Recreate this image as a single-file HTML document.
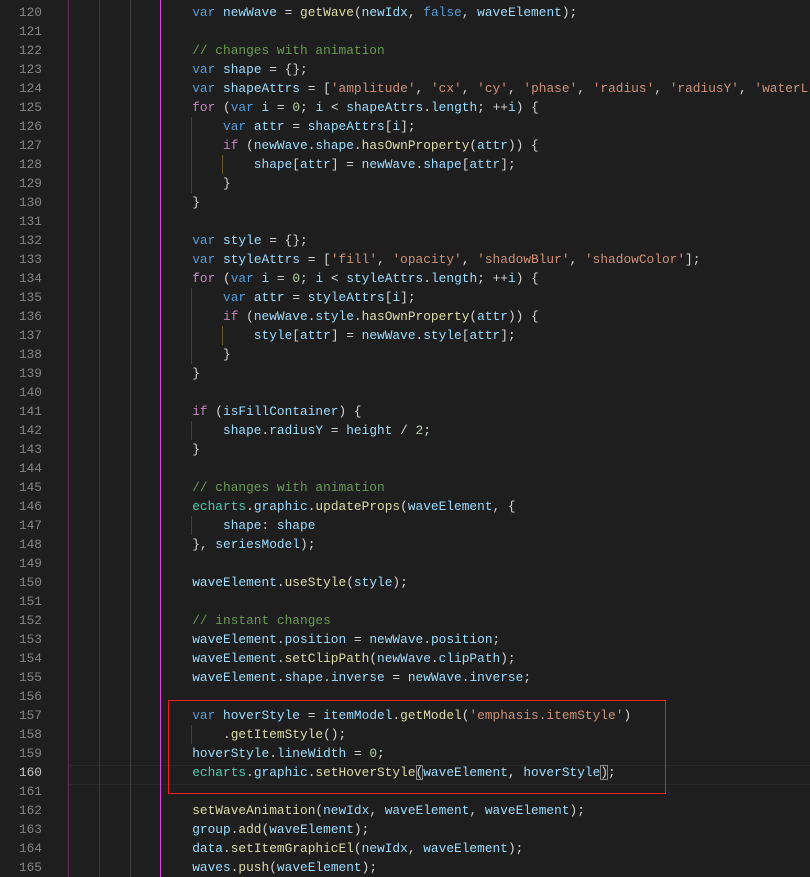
<!DOCTYPE html>
<html><head><meta charset="utf-8"><style>
html,body{margin:0;padding:0;background:#1e1e1e;width:810px;height:877px;overflow:hidden}
#w{position:absolute;left:0;top:0;width:810px;height:877px;overflow:hidden}
body{position:relative;font-family:Consolas,"Liberation Mono","DejaVu Sans Mono",monospace;font-size:12.8px}
.ln{position:absolute;left:0;width:42px;text-align:right;color:#858585;line-height:19px;height:19px}
.c{position:absolute;left:69px;white-space:pre;color:#d4d4d4;line-height:19px;height:19px;letter-spacing:0.02px}
.g{position:absolute;width:1px}
.k{color:#569cd6}.f{color:#c586c0}.v{color:#9cdcfe}.fn{color:#dcdcaa}.s{color:#ce9178}.cm{color:#6a9955}.n{color:#b5cea8}.t{color:#4ec9b0}
</style></head><body><div id="w">
<div style="position:absolute;left:68px;right:0;top:765px;height:18px;border-top:1px solid #282828;border-bottom:1px solid #282828"></div>
<div class="g" style="left:68px;top:0;height:877px;background:#5a2d5a"></div>
<div class="g" style="left:99px;top:0;height:877px;background:#1e3f5a"></div>
<div class="g" style="left:130px;top:0;height:877px;background:#404040"></div>
<div class="g" style="left:160px;top:0;height:877px;background:#da44da"></div>
<div class="g" style="left:191px;top:117px;height:76px;background:#1e4a6a"></div>
<div class="g" style="left:191px;top:288px;height:76px;background:#1e4a6a"></div>
<div class="g" style="left:191px;top:421px;height:19px;background:#1e4a6a"></div>
<div class="g" style="left:191px;top:516px;height:19px;background:#1e4a6a"></div>
<div class="g" style="left:191px;top:725px;height:19px;background:#404040"></div>
<div class="g" style="left:222px;top:155px;height:19px;background:#6a5a1a"></div>
<div class="g" style="left:222px;top:326px;height:19px;background:#6a5a1a"></div>

<div class="ln" style="top:3px">120</div><div class="c" style="top:3px">                <span class="k">var</span> <span class="v">newWave</span> = <span class="fn">getWave</span>(<span class="v">newIdx</span>, <span class="k">false</span>, <span class="v">waveElement</span>);</div>
<div class="ln" style="top:22px">121</div>
<div class="ln" style="top:41px">122</div><div class="c" style="top:41px">                <span class="cm">// changes with animation</span></div>
<div class="ln" style="top:60px">123</div><div class="c" style="top:60px">                <span class="k">var</span> <span class="v">shape</span> = {};</div>
<div class="ln" style="top:79px">124</div><div class="c" style="top:79px">                <span class="k">var</span> <span class="v">shapeAttrs</span> = [<span class="s">'amplitude'</span>, <span class="s">'cx'</span>, <span class="s">'cy'</span>, <span class="s">'phase'</span>, <span class="s">'radius'</span>, <span class="s">'radiusY'</span>, <span class="s">'waterL</span></div>
<div class="ln" style="top:98px">125</div><div class="c" style="top:98px">                <span class="f">for</span> (<span class="k">var</span> <span class="v">i</span> = <span class="n">0</span>; <span class="v">i</span> &lt; <span class="v">shapeAttrs</span>.<span class="v">length</span>; ++<span class="v">i</span>) {</div>
<div class="ln" style="top:117px">126</div><div class="c" style="top:117px">                    <span class="k">var</span> <span class="v">attr</span> = <span class="v">shapeAttrs</span>[<span class="v">i</span>];</div>
<div class="ln" style="top:136px">127</div><div class="c" style="top:136px">                    <span class="f">if</span> (<span class="v">newWave</span>.<span class="v">shape</span>.<span class="fn">hasOwnProperty</span>(<span class="v">attr</span>)) {</div>
<div class="ln" style="top:155px">128</div><div class="c" style="top:155px">                        <span class="v">shape</span>[<span class="v">attr</span>] = <span class="v">newWave</span>.<span class="v">shape</span>[<span class="v">attr</span>];</div>
<div class="ln" style="top:174px">129</div><div class="c" style="top:174px">                    }</div>
<div class="ln" style="top:193px">130</div><div class="c" style="top:193px">                }</div>
<div class="ln" style="top:212px">131</div>
<div class="ln" style="top:231px">132</div><div class="c" style="top:231px">                <span class="k">var</span> <span class="v">style</span> = {};</div>
<div class="ln" style="top:250px">133</div><div class="c" style="top:250px">                <span class="k">var</span> <span class="v">styleAttrs</span> = [<span class="s">'fill'</span>, <span class="s">'opacity'</span>, <span class="s">'shadowBlur'</span>, <span class="s">'shadowColor'</span>];</div>
<div class="ln" style="top:269px">134</div><div class="c" style="top:269px">                <span class="f">for</span> (<span class="k">var</span> <span class="v">i</span> = <span class="n">0</span>; <span class="v">i</span> &lt; <span class="v">styleAttrs</span>.<span class="v">length</span>; ++<span class="v">i</span>) {</div>
<div class="ln" style="top:288px">135</div><div class="c" style="top:288px">                    <span class="k">var</span> <span class="v">attr</span> = <span class="v">styleAttrs</span>[<span class="v">i</span>];</div>
<div class="ln" style="top:307px">136</div><div class="c" style="top:307px">                    <span class="f">if</span> (<span class="v">newWave</span>.<span class="v">style</span>.<span class="fn">hasOwnProperty</span>(<span class="v">attr</span>)) {</div>
<div class="ln" style="top:326px">137</div><div class="c" style="top:326px">                        <span class="v">style</span>[<span class="v">attr</span>] = <span class="v">newWave</span>.<span class="v">style</span>[<span class="v">attr</span>];</div>
<div class="ln" style="top:345px">138</div><div class="c" style="top:345px">                    }</div>
<div class="ln" style="top:364px">139</div><div class="c" style="top:364px">                }</div>
<div class="ln" style="top:383px">140</div>
<div class="ln" style="top:402px">141</div><div class="c" style="top:402px">                <span class="f">if</span> (<span class="v">isFillContainer</span>) {</div>
<div class="ln" style="top:421px">142</div><div class="c" style="top:421px">                    <span class="v">shape</span>.<span class="v">radiusY</span> = <span class="v">height</span> / <span class="n">2</span>;</div>
<div class="ln" style="top:440px">143</div><div class="c" style="top:440px">                }</div>
<div class="ln" style="top:459px">144</div>
<div class="ln" style="top:478px">145</div><div class="c" style="top:478px">                <span class="cm">// changes with animation</span></div>
<div class="ln" style="top:497px">146</div><div class="c" style="top:497px">                <span class="t">echarts</span>.<span class="v">graphic</span>.<span class="fn">updateProps</span>(<span class="v">waveElement</span>, {</div>
<div class="ln" style="top:516px">147</div><div class="c" style="top:516px">                    <span class="v">shape</span>: <span class="v">shape</span></div>
<div class="ln" style="top:535px">148</div><div class="c" style="top:535px">                }, <span class="v">seriesModel</span>);</div>
<div class="ln" style="top:554px">149</div>
<div class="ln" style="top:573px">150</div><div class="c" style="top:573px">                <span class="v">waveElement</span>.<span class="fn">useStyle</span>(<span class="v">style</span>);</div>
<div class="ln" style="top:592px">151</div>
<div class="ln" style="top:611px">152</div><div class="c" style="top:611px">                <span class="cm">// instant changes</span></div>
<div class="ln" style="top:630px">153</div><div class="c" style="top:630px">                <span class="v">waveElement</span>.<span class="v">position</span> = <span class="v">newWave</span>.<span class="v">position</span>;</div>
<div class="ln" style="top:649px">154</div><div class="c" style="top:649px">                <span class="v">waveElement</span>.<span class="fn">setClipPath</span>(<span class="v">newWave</span>.<span class="v">clipPath</span>);</div>
<div class="ln" style="top:668px">155</div><div class="c" style="top:668px">                <span class="v">waveElement</span>.<span class="v">shape</span>.<span class="v">inverse</span> = <span class="v">newWave</span>.<span class="v">inverse</span>;</div>
<div class="ln" style="top:687px">156</div>
<div class="ln" style="top:706px">157</div><div class="c" style="top:706px">                <span class="k">var</span> <span class="v">hoverStyle</span> = <span class="v">itemModel</span>.<span class="fn">getModel</span>(<span class="s">'emphasis.itemStyle'</span>)</div>
<div class="ln" style="top:725px">158</div><div class="c" style="top:725px">                    .<span class="fn">getItemStyle</span>();</div>
<div class="ln" style="top:744px">159</div><div class="c" style="top:744px">                <span class="v">hoverStyle</span>.<span class="v">lineWidth</span> = <span class="n">0</span>;</div>
<div class="ln" style="top:763px;color:#c6c6c6">160</div><div class="c" style="top:763px">                <span class="t">echarts</span>.<span class="v">graphic</span>.<span class="fn">setHoverStyle</span><span style="outline:1px solid #888;outline-offset:-1px">(</span><span class="v">waveElement</span>, <span class="v">hoverStyle</span><span style="outline:1px solid #888;outline-offset:-1px">)</span>;</div>
<div class="ln" style="top:782px">161</div>
<div class="ln" style="top:801px">162</div><div class="c" style="top:801px">                <span class="fn">setWaveAnimation</span>(<span class="v">newIdx</span>, <span class="v">waveElement</span>, <span class="v">waveElement</span>);</div>
<div class="ln" style="top:820px">163</div><div class="c" style="top:820px">                <span class="v">group</span>.<span class="fn">add</span>(<span class="v">waveElement</span>);</div>
<div class="ln" style="top:839px">164</div><div class="c" style="top:839px">                <span class="v">data</span>.<span class="fn">setItemGraphicEl</span>(<span class="v">newIdx</span>, <span class="v">waveElement</span>);</div>
<div class="ln" style="top:858px">165</div><div class="c" style="top:858px">                <span class="v">waves</span>.<span class="fn">push</span>(<span class="v">waveElement</span>);</div>

<div style="position:absolute;left:168px;top:700px;width:496px;height:92px;border:1px solid #e82222"></div>
</div></body></html>
